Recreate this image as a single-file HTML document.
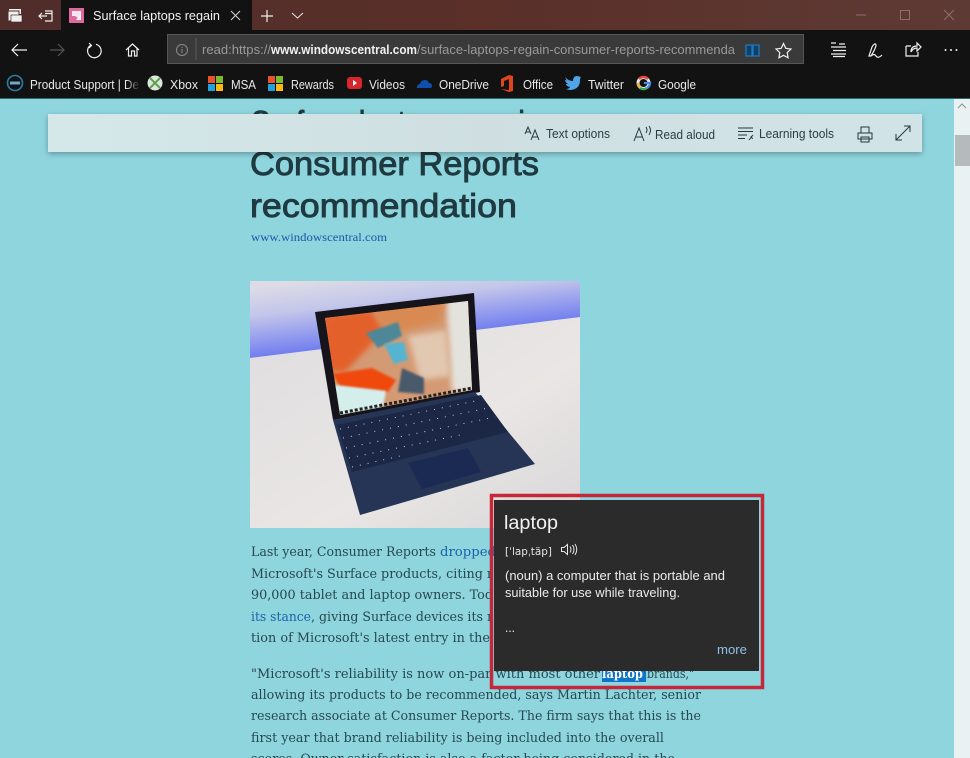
<!DOCTYPE html>
<html><head><meta charset="utf-8"><style>
html,body{margin:0;padding:0;background:#8fd5de;overflow:hidden}
svg{display:block}
.s{font-family:"Liberation Sans",sans-serif}
.r{font-family:"DejaVu Serif","Liberation Serif",serif;font-size:13px;fill:#26484f}
.l{fill:#1b62a8}
.b{font-family:"Liberation Sans",sans-serif;font-size:12.5px;fill:#e8e8e8}
.t{font-family:"Liberation Sans",sans-serif;font-size:12.5px;fill:#2a3e42}
.h{font-family:"Liberation Sans",sans-serif;font-size:33px;fill:#1f3a40;stroke:#1f3a40;stroke-width:.9}
.i{fill:none;stroke:#f0f0f0;stroke-width:1.2}
.d{fill:none;stroke:#25383c;stroke-width:1}
</style></head><body>
<svg width="970" height="758" viewBox="0 0 970 758" xmlns="http://www.w3.org/2000/svg">
<defs>
<linearGradient id="tb" x1="0" x2="1" y1="0" y2="0"><stop offset="0" stop-color="#4f2d2a"/><stop offset=".5" stop-color="#5a3029"/><stop offset="1" stop-color="#5e3a34"/></linearGradient>
<linearGradient id="wall" gradientUnits="userSpaceOnUse" x1="407" y1="270" x2="415" y2="337"><stop offset="0" stop-color="#dcdbe6"/><stop offset=".4" stop-color="#c4c6ea"/><stop offset=".8" stop-color="#8f98ee"/><stop offset="1" stop-color="#7480ee"/></linearGradient>
<linearGradient id="tbl" x1="0" x2="1" y1="0" y2="1"><stop offset="0" stop-color="#dfdde0"/><stop offset=".6" stop-color="#e9e6e4"/><stop offset="1" stop-color="#d8d6d8"/></linearGradient>
<linearGradient id="bar" x1="0" x2="1" y1="0" y2="0"><stop offset="0" stop-color="#d4e8ea"/><stop offset=".5" stop-color="#cfdfe1"/><stop offset="1" stop-color="#d0e4e8"/></linearGradient>
<linearGradient id="fade" x1="0" x2="1" y1="0" y2="0"><stop offset="0" stop-color="#121212" stop-opacity="0"/><stop offset="1" stop-color="#121212"/></linearGradient>
<filter id="sh" x="-5%" y="-30%" width="110%" height="170%"><feDropShadow dx="0" dy="2" stdDeviation="3" flood-color="#000" flood-opacity=".3"/></filter>
<filter id="bl"><feGaussianBlur stdDeviation="3"/></filter>
<filter id="bs"><feGaussianBlur stdDeviation="1"/></filter>
<clipPath id="scr"><polygon points="325,318 468,301 472,390 340,415"/></clipPath>
<clipPath id="img"><rect x="250" y="281" width="330" height="247"/></clipPath>
</defs>

<!-- page -->
<rect width="970" height="758" fill="#8fd5de"/>
<text class="h" x="251" y="134" textLength="290" lengthAdjust="spacingAndGlyphs">Surface laptops regain</text>
<text class="h" x="250" y="175" textLength="289" lengthAdjust="spacingAndGlyphs">Consumer Reports</text>
<text class="h" x="250" y="217" textLength="267" lengthAdjust="spacingAndGlyphs">recommendation</text>
<text x="251" y="241" font-family="'Liberation Serif',serif" font-size="11.5" fill="#1a5aa8" textLength="136" lengthAdjust="spacingAndGlyphs">www.windowscentral.com</text>

<!-- photo -->
<g clip-path="url(#img)">
<rect x="250" y="281" width="330" height="80" fill="url(#wall)"/>
<polygon points="250,358 580,317 580,528 250,528" fill="url(#tbl)"/>
<polygon points="315,312 474,293 480,392 333,420" fill="#14141a"/>
<polygon points="325,318 468,301 472,390 340,415" fill="#d49a74"/>
<g clip-path="url(#scr)">
<polygon points="446,296 474,296 476,392 452,392" fill="#e4e2dc" filter="url(#bl)"/>
<polygon points="322,316 372,310 385,330 345,372 324,372" fill="#e4602a" filter="url(#bl)"/>
<polygon points="372,308 446,298 440,322 400,332 380,326" fill="#d98a52" filter="url(#bl)"/>
<polygon points="366,333 398,322 402,336 378,348" fill="#4d8798" filter="url(#bs)"/>
<polygon points="384,344 404,342 408,360 394,364" fill="#56b4d0" filter="url(#bs)"/>
<polygon points="408,336 446,330 450,376 420,380" fill="#e2c8b0" filter="url(#bl)"/>
<polygon points="332,374 372,368 396,380 388,392 340,386" fill="#f04a10" filter="url(#bs)"/>
<polygon points="334,385 386,391 382,412 340,418" fill="#d4eeec" filter="url(#bs)"/>
<polygon points="402,368 424,378 424,394 398,392" fill="#4a5a6c" filter="url(#bs)"/>
<line x1="340" y1="413" x2="472" y2="388" stroke="#222" stroke-width="3" stroke-dasharray="3 2"/>
</g>
<polygon points="333,420 475,392 535,464 360,515" fill="#263555"/>
<polygon points="337,425 481,395 508,432 352,472" fill="#1b2744"/>
<g stroke="#c8d0e0" stroke-width="1" stroke-dasharray="1 7" fill="none">
<line x1="340" y1="429" x2="480" y2="400"/>
<line x1="343" y1="438" x2="488" y2="408"/>
<line x1="346" y1="448" x2="495" y2="417"/>
<line x1="349" y1="458" x2="465" y2="434"/>
<line x1="352" y1="467" x2="400" y2="456"/>
</g>
<polygon points="408,463 468,448 481,472 422,489" fill="#1a2a52"/>
</g>

<!-- article text -->
<text class="r" x="251" y="556" textLength="185" lengthAdjust="spacingAndGlyphs">Last year, Consumer Reports</text>
<text class="r l" x="440" y="556" textLength="56" lengthAdjust="spacingAndGlyphs">dropped</text>
<text class="r" x="251" y="578" textLength="242" lengthAdjust="spacingAndGlyphs">Microsoft's Surface products, citing r</text>
<text class="r" x="251" y="599" textLength="242" lengthAdjust="spacingAndGlyphs">90,000 tablet and laptop owners. Tod</text>
<text class="r l" x="251" y="621" textLength="60" lengthAdjust="spacingAndGlyphs">its stance</text>
<text class="r" x="311" y="621" textLength="182" lengthAdjust="spacingAndGlyphs">, giving Surface devices its r</text>
<text class="r" x="251" y="642" textLength="239" lengthAdjust="spacingAndGlyphs">tion of Microsoft's latest entry in the</text>
<text class="r" x="251" y="678" textLength="349" lengthAdjust="spacingAndGlyphs">"Microsoft's reliability is now on-par with most other</text>
<rect x="602" y="664" width="44" height="18" fill="#0f75c8"/>
<text class="r" x="602" y="678" style="fill:#fff;font-weight:bold" textLength="41" lengthAdjust="spacingAndGlyphs">laptop</text>
<text class="r" x="647" y="678" textLength="47" lengthAdjust="spacingAndGlyphs">brands,"</text>
<text class="r" x="251" y="699" textLength="450" lengthAdjust="spacingAndGlyphs">allowing its products to be recommended, says Martin Lachter, senior</text>
<text class="r" x="251" y="720" textLength="450" lengthAdjust="spacingAndGlyphs">research associate at Consumer Reports. The firm says that this is the</text>
<text class="r" x="251" y="742" textLength="413" lengthAdjust="spacingAndGlyphs">first year that brand reliability is being included into the overall</text>
<text class="r" x="251" y="763" textLength="424" lengthAdjust="spacingAndGlyphs">scores. Owner satisfaction is also a factor being considered in the</text>

<!-- scrollbar -->
<rect x="954" y="99" width="16" height="659" fill="#e9f1f2"/>
<rect x="955" y="135" width="15" height="31" fill="#b5bbbd"/>
<path d="M958 108l4-4 4 4" fill="none" stroke="#8a9294" stroke-width="1"/>

<!-- reading toolbar -->
<rect x="48" y="114" width="874" height="38" fill="url(#bar)" filter="url(#sh)"/>
<text class="t" x="546" y="138" textLength="64" lengthAdjust="spacingAndGlyphs">Text options</text>
<text class="t" x="655" y="139" textLength="60" lengthAdjust="spacingAndGlyphs">Read aloud</text>
<text class="t" x="759" y="138" textLength="75" lengthAdjust="spacingAndGlyphs">Learning tools</text>
<path class="d" d="M525 134l3-7 3 7M526 132h4M531 140l4-10 4 10M532.500 137h5"/>
<path class="d" d="M634 141l5-13 5 13M636 137h6M646 127q2 3 0 6M649 126q3 4 0 9"/>
<path class="d" d="M738 128h15M738 131.500h15M738 135h9M738 138.500h7M749 140l4-5M751 136l1.500 3"/>
<path class="d" d="M861 133v-6h8v6M858 133h14v6h-14zM861 137h8v5h-8z"/>
<path class="d" d="M896 140l14-14M904 126h6v6M896 134v6h6"/>

<!-- chrome -->
<rect width="970" height="31" fill="url(#tb)"/>
<rect y="30" width="970" height="69" fill="#121212"/>
<rect y="98" width="970" height="1" fill="#2e6870"/>
<rect x="61" y="0" width="191" height="31" fill="#121212"/>

<rect x="9" y="9" width="12" height="5" fill="#f0f0f0"/><rect x="8" y="11" width="11" height="10" fill="#f0f0f0" stroke="#4f2d2a"/><rect x="11" y="15" width="11" height="7" fill="#f0f0f0" stroke="#4f2d2a" stroke-width=".7"/>
<path class="i" d="M45 11h7v10h-7M39 16h8M42 13l-3 3 3 3M45 13.500h7" stroke-width="1"/>
<rect x="69" y="8" width="15" height="15" fill="#dc6a9c"/>
<path d="M72 11h9v9l-6-4h-3z" fill="#f4e6ee"/><path d="M76 20l5-7v7z" fill="#f8f2f5"/>
<text class="s" x="93" y="20" font-size="13" fill="#f2f2f2" textLength="127" lengthAdjust="spacingAndGlyphs">Surface laptops regain</text>
<path d="M231 11l9 9M240 11l-9 9" stroke="#cfcfcf" stroke-width="1.100"/>
<path d="M267 10v12M261 16h12" stroke="#f0f0f0" stroke-width="1.200"/>
<path d="M292 13l5.500 5 5.500-5" fill="none" stroke="#ddd" stroke-width="1.100"/>
<path d="M856 15h10" stroke="#8d6f6a" stroke-width="1"/>
<rect x="900.500" y="10.500" width="9" height="9" fill="none" stroke="#8d6f6a"/>
<path d="M944 10l10 10M954 10l-10 10" stroke="#8d6f6a" stroke-width="1"/>

<path class="i" d="M12 50h15M18 44l-6 6 6 6" stroke-width="1.300"/>
<path d="M50 50h14M58 44l6 6-6 6" fill="none" stroke="#555" stroke-width="1.200"/>
<path class="i" d="M91 45a6.800 6.800 0 1 0 5-.7M89 43l2.500 2.500-2.500 2.500" stroke-width="1.200"/>
<path class="i" d="M126 50l6.500-6 6.500 6M128.500 48v8h3v-5h3v5h2.500v-8"/>

<rect x="167.500" y="34.500" width="636" height="29" fill="#3a3a3a" stroke="#565656"/>
<circle cx="182" cy="50" r="5.500" fill="none" stroke="#8a8a8a"/><path d="M182 49v4M182 47v1" stroke="#8a8a8a"/>
<path d="M196 38v22" stroke="#5a5a5a"/>
<text class="s" x="202" y="54" font-size="13" fill="#9a9a9a" textLength="69" lengthAdjust="spacingAndGlyphs">read:https://</text>
<text class="s" x="271" y="54" font-size="13" font-weight="bold" fill="#f0f0f0" textLength="146" lengthAdjust="spacingAndGlyphs">www.windowscentral.com</text>
<text class="s" x="417" y="54" font-size="13" fill="#9a9a9a" textLength="318" lengthAdjust="spacingAndGlyphs">/surface-laptops-regain-consumer-reports-recommenda</text>
<path d="M746 45h6v11h-6zM753 45h6v11h-6z" fill="#123f66" stroke="#1f78c4" stroke-width="1.300"/>
<path class="i" d="M783.500 43.500l2.300 4.800 5.200.7-3.800 3.600.9 5.200-4.600-2.500-4.600 2.500.9-5.200-3.800-3.600 5.200-.7z" stroke-width="1.300"/>

<path class="i" d="M831 43h5M839 44h6M831 47h15M833 50.500h13M831 54h15M833 56.500h12" stroke-width="1.100"/>
<path class="i" d="M869 56l3-9q3-5 4-2 0 3-5 11zM871 56q3-3 5 0t6-1" stroke-width="1.100"/>
<path class="i" d="M906 46h5M906 46v10h12v-4M911 52q0-6 6-6v-3l4 4-4 4v-3q-4 0-6 4" stroke-width="1.100"/>
<circle cx="945.500" cy="50" r="1" fill="#eee"/><circle cx="951" cy="50" r="1" fill="#eee"/><circle cx="956.500" cy="50" r="1" fill="#eee"/>

<!-- bookmarks -->
<circle cx="15" cy="83" r="7.500" fill="none" stroke="#2a7ea8" stroke-width="1.600"/><rect x="10" y="81.500" width="10" height="3" fill="#6fa8c8"/>
<text class="b" x="30" y="89" textLength="109" lengthAdjust="spacingAndGlyphs">Product Support | De</text>
<rect x="126" y="72" width="14" height="22" fill="url(#fade)"/>
<circle cx="155" cy="83" r="7.500" fill="#dfe8df"/><path d="M150 78l10 10M160 78l-10 10" stroke="#5fa04e" stroke-width="2"/>
<text class="b" x="170" y="89" textLength="28" lengthAdjust="spacingAndGlyphs">Xbox</text>
<rect x="208" y="76" width="7" height="7" fill="#e8532c"/><rect x="216" y="76" width="7" height="7" fill="#7fba2a"/><rect x="208" y="84" width="7" height="7" fill="#1ea3e0"/><rect x="216" y="84" width="7" height="7" fill="#fdb913"/>
<text class="b" x="231" y="89" textLength="25" lengthAdjust="spacingAndGlyphs">MSA</text>
<rect x="268" y="76" width="7" height="7" fill="#e8532c"/><rect x="276" y="76" width="7" height="7" fill="#7fba2a"/><rect x="268" y="84" width="7" height="7" fill="#1ea3e0"/><rect x="276" y="84" width="7" height="7" fill="#fdb913"/>
<text class="b" x="291" y="89" textLength="43" lengthAdjust="spacingAndGlyphs">Rewards</text>
<rect x="347" y="77" width="15" height="12" rx="3" fill="#d8262c"/><path d="M353 80l4 3-4 3z" fill="#fff"/>
<text class="b" x="369" y="89" textLength="36" lengthAdjust="spacingAndGlyphs">Videos</text>
<path d="M417 88q0-4 3-4 1-4 5-4 3 0 4 3 3 0 3 3 0 2-2 2z" fill="#0f4fb0"/>
<text class="b" x="439" y="89" textLength="50" lengthAdjust="spacingAndGlyphs">OneDrive</text>
<path d="M501 79l8-4 4 1v15l-4 1-8-3 8 1V79l-5 2v5l-3 1z" fill="#e0451c"/>
<text class="b" x="523" y="89" textLength="30" lengthAdjust="spacingAndGlyphs">Office</text>
<path d="M566 78q3 3 7 3 0-5 4-5 2 0 3 1l1-1-1 3v1q0 9-9 10-3 0-5-1 3 0 4-2-4-1-4-3h2q-3-2-3-4l2 .5q-2-2-1-4z" fill="#4da6e8"/>
<text class="b" x="588" y="89" textLength="36" lengthAdjust="spacingAndGlyphs">Twitter</text>
<circle cx="643.500" cy="83" r="5.500" fill="none" stroke="#e8e8e8" stroke-width="3"/>
<path d="M639 79a6 6 0 0 1 9 0" fill="none" stroke="#e04a3c" stroke-width="2.500"/>
<path d="M638 83a6 6 0 0 0 2 4.500" fill="none" stroke="#f2b632" stroke-width="2.500"/>
<path d="M640 88a6 6 0 0 0 7 0" fill="none" stroke="#3aa757" stroke-width="2.500"/>
<path d="M644 83h6a6 6 0 0 1-3 5" fill="none" stroke="#4a86e8" stroke-width="2.300"/>
<text class="b" x="658" y="89" textLength="38" lengthAdjust="spacingAndGlyphs">Google</text>

<!-- popup -->
<rect x="494" y="500" width="265" height="171" fill="#2b2b2b"/>
<rect x="491.500" y="495.500" width="271" height="192" fill="none" stroke="#c6283a" stroke-width="3.500"/>
<text class="s" x="504" y="529" font-size="19" fill="#f2f2f2" textLength="54" lengthAdjust="spacingAndGlyphs">laptop</text>
<text x="505" y="555" font-family="'DejaVu Sans',sans-serif" font-size="11" fill="#e4e4e4" textLength="47" lengthAdjust="spacingAndGlyphs">[ˈlapˌtäp]</text>
<path d="M561.500 547.500h2.500l3.500-3v10l-3.500-3h-2.500zM570 546.500q2 3 0 6M572.500 545q3 4.500 0 9M575 544q3.500 5.500 0 11" fill="none" stroke="#e8e8e8" stroke-width="1"/>
<text class="s" x="505" y="580" font-size="13" fill="#ececec" textLength="220" lengthAdjust="spacingAndGlyphs">(noun) a computer that is portable and</text>
<text class="s" x="505" y="597" font-size="13" fill="#ececec" textLength="175" lengthAdjust="spacingAndGlyphs">suitable for use while traveling.</text>
<text class="s" x="505" y="632" font-size="13" fill="#ececec" textLength="10" lengthAdjust="spacingAndGlyphs">...</text>
<text class="s" x="717" y="654" font-size="13" fill="#8fc1e2" textLength="30" lengthAdjust="spacingAndGlyphs">more</text>
</svg>
</body></html>
